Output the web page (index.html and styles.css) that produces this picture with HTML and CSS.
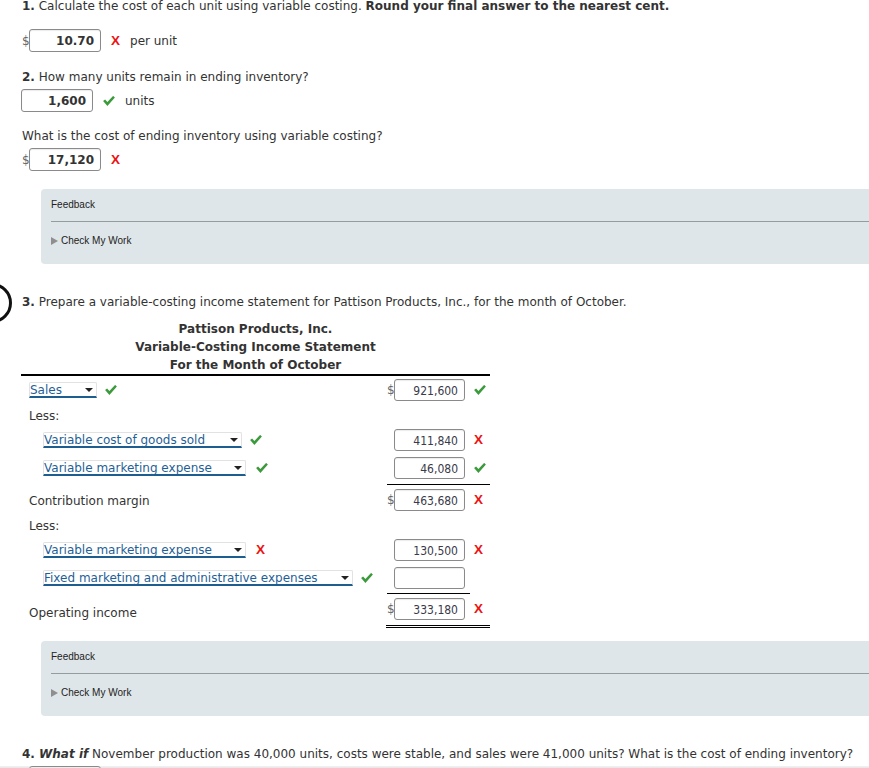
FILE: index.html
```html
<!DOCTYPE html>
<html>
<head>
<meta charset="utf-8">
<link rel="stylesheet" href="styles.css">
</head>
<body>
<svg class="defs" width="0" height="0" aria-hidden="true">
  <symbol id="chk" viewBox="0 0 12 10">
    <path d="M0.1 5.1 L2.1 3.4 L4.4 6.1 L10.1 -0.1 L11.9 1.4 L4.4 9.9 Z" fill="#3b9a3b"/>
  </symbol>
</svg>
<div class="edge"></div>
<div class="marker"></div>
<div class="page">
  <p class="q q1"><b>1.</b> Calculate the cost of each unit using variable costing. <b>Round your final answer to the nearest cent.</b></p>
  <div class="ans ans1"><span class="cur">$</span><span class="field">10.70</span><span class="x">X</span><span class="unit">per unit</span></div>

  <p class="q q2"><b>2.</b> How many units remain in ending inventory?</p>
  <div class="ans ans2"><span class="field">1,600</span><svg class="ck" width="12" height="10"><use href="#chk"/></svg><span class="unit">units</span></div>

  <p class="q q2b">What is the cost of ending inventory using variable costing?</p>
  <div class="ans ans3"><span class="cur">$</span><span class="field">17,120</span><span class="x">X</span></div>

  <div class="fb fb1">
    <div class="fb-title">Feedback</div>
    <div class="fb-line"></div>
    <div class="fb-check"><span class="tri"></span>Check My Work</div>
  </div>

  <p class="q q3"><b>3.</b> Prepare a variable-costing income statement for Pattison Products, Inc., for the month of October.</p>

  <div class="stmt">
    <div class="st-head">
      <div>Pattison Products, Inc.</div>
      <div>Variable-Costing Income Statement</div>
      <div>For the Month of October</div>
    </div>
    <div class="st-rule"></div>

    <div class="row h28">
      <div class="lab"><span class="sel w-sales">Sales</span><svg class="ck sm" width="12" height="10"><use href="#chk"/></svg></div>
      <div class="val"><span class="d">$</span><span class="num">921,600</span><svg class="ck vm" width="12" height="10"><use href="#chk"/></svg></div>
    </div>
    <div class="row h22"><div class="lab txt">Less:</div></div>
    <div class="row h28">
      <div class="lab ind"><span class="sel w-vcgs">Variable cost of goods sold</span><svg class="ck sm" width="12" height="10"><use href="#chk"/></svg></div>
      <div class="val"><span class="d"></span><span class="num">411,840</span><span class="x vm">X</span></div>
    </div>
    <div class="row h28">
      <div class="lab ind"><span class="sel w-vme">Variable marketing expense</span><svg class="ck sm2" width="12" height="10"><use href="#chk"/></svg></div>
      <div class="val"><span class="d"></span><span class="num">46,080</span><svg class="ck vm" width="12" height="10"><use href="#chk"/></svg></div>
    </div>
    <div class="sum sum1"></div>
    <div class="row h30">
      <div class="lab txt">Contribution margin</div>
      <div class="val"><span class="d">$</span><span class="num">463,680</span><span class="x vm">X</span></div>
    </div>
    <div class="row h20"><div class="lab txt">Less:</div></div>
    <div class="row h30">
      <div class="lab ind"><span class="sel w-vme">Variable marketing expense</span><span class="x sm2">X</span></div>
      <div class="val"><span class="d"></span><span class="num">130,500</span><span class="x vm">X</span></div>
    </div>
    <div class="row h26">
      <div class="lab ind"><span class="sel w-fixed">Fixed marketing and administrative expenses</span><svg class="ck sm" width="12" height="10"><use href="#chk"/></svg></div>
      <div class="val"><span class="d"></span><span class="num"></span></div>
    </div>
    <div class="sum sum2"></div>
    <div class="row h30">
      <div class="lab txt low">Operating income</div>
      <div class="val"><span class="d">$</span><span class="num">333,180</span><span class="x vm">X</span></div>
    </div>
    <div class="dbl"></div>
  </div>

  <div class="fb fb2">
    <div class="fb-title">Feedback</div>
    <div class="fb-line"></div>
    <div class="fb-check"><span class="tri"></span>Check My Work</div>
  </div>

  <p class="q q4"><b>4. <i>What if</i></b> November production was 40,000 units, costs were stable, and sales were 41,000 units? What is the cost of ending inventory?</p>
  <div class="ans ans4"><span class="cur"></span><span class="field"></span></div>
</div>
</body>
</html>
```

FILE: styles.css
```css
* { box-sizing: border-box; }
html, body { margin: 0; padding: 0; background: #fff; }
body {
  position: relative;
  width: 869px;
  height: 768px;
  overflow: hidden;
  font-family: "DejaVu Sans", Verdana, sans-serif;
  font-size: 12px;
  color: #333;
}
.defs { position: absolute; width: 0; height: 0; }
.marker {
  position: absolute;
  left: -28px;
  top: 283px;
  width: 40px;
  height: 40px;
  border: 3px solid #111;
  border-radius: 50%;
}
.edge {
  position: absolute;
  left: 0;
  right: 0;
  bottom: 0;
  height: 2px;
  background: linear-gradient(#f2f2f2, #e6e6e6);
}
.page { position: relative; padding-left: 22px; }
.q { margin: 0; padding-top: 2px; line-height: 16px; white-space: nowrap; }
.q1 { margin-top: -4px; }
.q2 { margin-top: 15px; }
.q2b { margin-top: 14px; }
.q3 { margin-top: 28px; }
.q4 { margin-top: 28px; }

.ans { display: flex; align-items: center; height: 23px; }
.ans1 { margin-top: 15px; }
.ans2 { margin-top: 4px; margin-left: -1px; }
.ans3 { margin-top: 4px; }
.ans4 { margin-top: 4px; }
.cur { width: 7px; color: #666; }
.field {
  display: inline-flex;
  align-items: center;
  justify-content: flex-end;
  width: 72px;
  height: 23px;
  padding-right: 6px;
  padding-top: 1px;
  border: 1px solid #8a8a8a;
  border-radius: 3px;
  background: #fff;
  box-shadow: inset 0 1px 1px rgba(0,0,0,0.08);
  font-weight: bold;
  color: #333;
}
.x {
  font-family: "Liberation Sans", Arial, sans-serif;
  font-weight: bold;
  font-size: 13.5px;
  color: #ee1111;
  margin-left: 10px;
  line-height: 12px;
}
.ck { display: block; margin-left: 10px; flex: none; }
.unit { margin-left: 10px; padding-top: 1px; }

.fb {
  margin-left: 19px;
  height: 75px;
  background: #dfe6e9;
  border-radius: 4px 0 0 4px;
  padding-left: 10px;
  font-family: "Liberation Sans", Arial, sans-serif;
  font-size: 10px;
  color: #222;
}
.fb1 { margin-top: 18px; }
.fb2 { margin-top: 13px; }
.fb-title { padding-top: 10px; line-height: 12px; }
.fb-line { margin-top: 10px; border-top: 1px solid #949c9f; }
.fb-check { margin-top: 13px; line-height: 12px; display: flex; align-items: center; }
.tri {
  width: 0; height: 0;
  border-left: 7px solid #8f8f8f;
  border-top: 4px solid transparent;
  border-bottom: 4px solid transparent;
  margin-right: 3px;
  margin-top: -1px;
}

.stmt { width: 469px; margin-left: -1px; }
.st-head { margin-top: 10px; text-align: center; font-weight: bold; line-height: 18px; color: #333; }
.st-rule { margin-top: 0; border-top: 2px solid #000; }
.row { display: flex; align-items: center; }
.h20 { height: 20px; }
.h22 { height: 22px; }
.h26 { height: 26px; }
.h28 { height: 28px; }
.h30 { height: 30px; }
.lab { width: 366px; display: flex; align-items: center; padding-left: 8px; }
.lab.ind { padding-left: 22px; }
.lab.txt { padding-top: 2px; }
.lab.low { padding-top: 7px; }
.val { width: 103px; display: flex; align-items: center; }
.d { width: 7px; color: #666; }
.num {
  display: inline-flex;
  align-items: center;
  justify-content: flex-end;
  width: 71px;
  height: 22px;
  padding-right: 6px;
  padding-top: 1px;
  border: 1px solid #8a8a8a;
  border-radius: 3px;
  background: #fff;
  box-shadow: inset 0 1px 1px rgba(0,0,0,0.08);
  font-family: "DejaVu Sans Condensed", "Liberation Sans", sans-serif;
  font-stretch: condensed;
  font-size: 12px;
  color: #3a3a4a;
}
.sm { margin-left: 8px; }
.sm2 { margin-left: 10px; }
.vm { margin-left: 9px; }
.sel {
  position: relative;
  display: inline-block;
  height: 16px;
  padding-top: 1px;
  line-height: 12px;
  border: 1px solid #e2e2e2;
  border-bottom: 2px solid #1d5d90;
  border-radius: 2px 2px 0 0;
  color: #1f5f97;
  white-space: nowrap;
}
.sel::after {
  content: "";
  position: absolute;
  right: 3px;
  top: 5px;
  border-left: 4px solid transparent;
  border-right: 4px solid transparent;
  border-top: 4px solid #222;
}
.w-sales { width: 68px; }
.w-vcgs { width: 199px; }
.w-vme { width: 203px; }
.w-fixed { width: 310px; }
.sum { border-top: 1px solid #000; margin-top: 2px; margin-left: 366px; }
.sum1 { width: 103px; }
.sum2 { width: 83px; }
.dbl { margin-top: 1px; margin-left: 365px; width: 104px; border-top: 3px double #000; }
```
